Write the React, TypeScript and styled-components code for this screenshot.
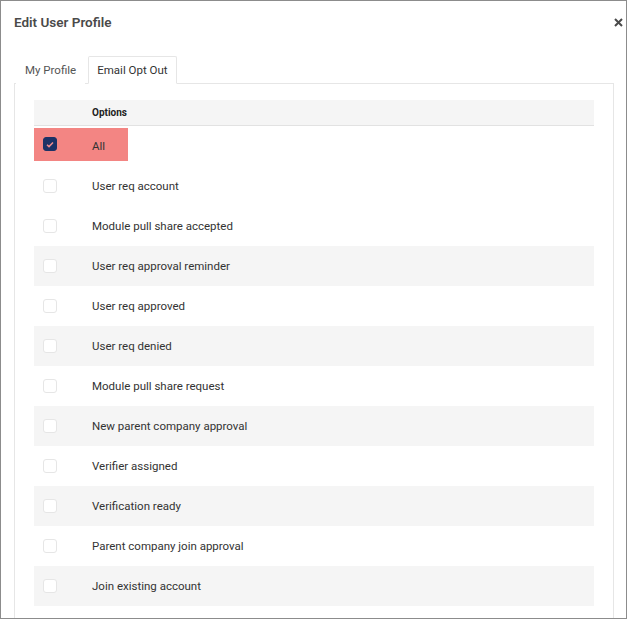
import styled, { createGlobalStyle } from 'styled-components'

const options = [
    'All',
    'User req account',
    'Module pull share accepted',
    'User req approval reminder',
    'User req approved',
    'User req denied',
    'Module pull share request',
    'New parent company approval',
    'Verifier assigned',
    'Verification ready',
    'Parent company join approval',
    'Join existing account',
]

const GlobalStyle = createGlobalStyle`
    html, body {
        margin: 0;
        padding: 0;
        background: #ffffff;
    }
    body {
        font-family: Roboto, 'Liberation Sans', Arial, sans-serif;
        color: #333333;
    }
`

const CloseIcon = () => (
    <svg width='9' height='9' viewBox='0 0 9 9'>
        <path d='M1 1 L8 8 M8 1 L1 8' stroke='#4a4a4a' strokeWidth='2' strokeLinecap='butt' />
    </svg>
)

const CheckMark = () => (
    <svg width='8' height='7' viewBox='0 0 8 7'>
        <path d='M1 3.8 L3 5.6 L7 1.4' fill='none' stroke='#f08c8c' strokeWidth='1.5' />
    </svg>
)

export default function App() {
    return (
        <>
            <GlobalStyle />
            <Dialog>
                <Header>
                    <Title>Edit User Profile</Title>
                    <Close aria-label='close'>
                        <CloseIcon />
                    </Close>
                </Header>
                <Body>
                    <TabList>
                        <Tab>My Profile</Tab>
                        <Tab $active>Email Opt Out</Tab>
                    </TabList>
                    <Panel>
                        <Table>
                            <HeadRow>
                                <CheckCell />
                                <HeadLabel>Options</HeadLabel>
                            </HeadRow>
                            {options.map((name, i) =>
                                i === 0 ? (
                                    <Row key={name}>
                                        <Highlight>
                                            <CheckCell>
                                                <Box $checked>
                                                    <CheckMark />
                                                </Box>
                                            </CheckCell>
                                            <Label $shift>{name}</Label>
                                        </Highlight>
                                    </Row>
                                ) : (
                                    <Row key={name} $striped={i % 2 === 1 && i > 1}>
                                        <CheckCell>
                                            <Box />
                                        </CheckCell>
                                        <Label>{name}</Label>
                                    </Row>
                                )
                            )}
                        </Table>
                    </Panel>
                </Body>
            </Dialog>
        </>
    )
}

const Dialog = styled.div`
    width: 627px;
    height: 619px;
    box-sizing: border-box;
    border: 1px solid #8c8c8c;
    background: #ffffff;
    overflow: hidden;
    display: flex;
    flex-direction: column;
`
const Header = styled.div`
    display: flex;
    justify-content: space-between;
    align-items: flex-start;
    height: 55px;
    padding: 13px 3px 0 13px;
    box-sizing: border-box;
    flex-shrink: 0;
`
const Title = styled.h1`
    margin: 0;
    font-size: 13.5px;
    line-height: 16px;
    font-weight: 600;
    color: #4a4a4a;
`
const Close = styled.button`
    border: none;
    background: none;
    padding: 0;
    margin-top: 4px;
    width: 9px;
    height: 9px;
    display: flex;
    cursor: pointer;
`
const Body = styled.div`
    padding: 0 12px 0 13px;
    display: flex;
    flex-direction: column;
    flex: 1;
`
const TabList = styled.div`
    display: flex;
    gap: 3px;
    padding-left: 2px;
    margin-bottom: -1px;
    position: relative;
    z-index: 1;
`
const Tab = styled.div<{ $active?: boolean }>`
    height: 28px;
    box-sizing: border-box;
    padding: 0 8px;
    display: flex;
    align-items: center;
    font-size: 11.5px;
    color: ${p => (p.$active ? '#333333' : '#555555')};
    background: #ffffff;
    border: 1px solid ${p => (p.$active ? '#e6e6e6' : 'transparent')};
    border-bottom-color: #ffffff;
    border-radius: 2px 2px 0 0;
`
const Panel = styled.div`
    border: 1px solid #e6e6e6;
    padding: 16px 19px;
    flex: 1;
`
const Table = styled.div`
    display: flex;
    flex-direction: column;
`
const HeadRow = styled.div`
    display: flex;
    align-items: center;
    height: 25px;
    background: #f5f5f5;
    border-bottom: 1px solid #e2e2e2;
`
const HeadLabel = styled.span`
    font-size: 10px;
    font-weight: 700;
    color: #222222;
`
const Row = styled.div<{ $striped?: boolean }>`
    display: flex;
    align-items: center;
    height: 40px;
    background: ${p => (p.$striped ? '#f5f5f5' : '#ffffff')};
`
const Highlight = styled.div`
    display: flex;
    align-items: center;
    width: 94px;
    height: 33px;
    margin-top: -3px;
    background: #f38583;
`
const CheckCell = styled.div`
    width: 58px;
    padding-left: 9px;
    box-sizing: border-box;
    display: flex;
    align-items: center;
`
const Box = styled.span<{ $checked?: boolean }>`
    width: 14px;
    height: 14px;
    box-sizing: border-box;
    border-radius: 3px;
    display: flex;
    align-items: center;
    justify-content: center;
    background: ${p => (p.$checked ? '#1c3266' : '#ffffff')};
    border: 1px solid ${p => (p.$checked ? '#1c3266' : '#e6e6e6')};
    margin-top: ${p => (p.$checked ? '-1px' : '0')};
`
const Label = styled.span<{ $shift?: boolean }>`
    font-size: 11.5px;
    color: #333333;
    margin-top: ${p => (p.$shift ? '3px' : '0')};
`
